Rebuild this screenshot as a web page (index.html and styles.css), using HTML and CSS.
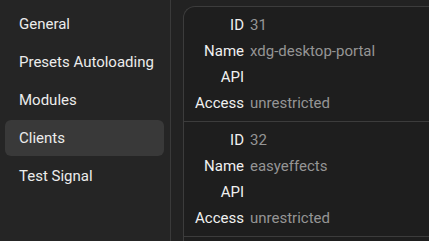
FILE: index.html
```html
<!DOCTYPE html>
<html>
<head>
<meta charset="utf-8">
<link rel="stylesheet" href="styles.css">
</head>
<body>
<div class="app">
  <nav class="sidebar">
    <div class="item">General</div>
    <div class="item">Presets Autoloading</div>
    <div class="item">Modules</div>
    <div class="item selected">Clients</div>
    <div class="item">Test Signal</div>
  </nav>
  <main class="content">
    <div class="card">
      <div class="client">
        <div class="row"><span class="label">ID</span><span class="value">31</span></div>
        <div class="row"><span class="label">Name</span><span class="value">xdg-desktop-portal</span></div>
        <div class="row"><span class="label">API</span><span class="value"></span></div>
        <div class="row"><span class="label">Access</span><span class="value">unrestricted</span></div>
      </div>
      <div class="client">
        <div class="row"><span class="label">ID</span><span class="value">32</span></div>
        <div class="row"><span class="label">Name</span><span class="value">easyeffects</span></div>
        <div class="row"><span class="label">API</span><span class="value"></span></div>
        <div class="row"><span class="label">Access</span><span class="value">unrestricted</span></div>
      </div>
      <div class="client"></div>
    </div>
  </main>
</div>
</body>
</html>
```
FILE: styles.css
```css
html, body {
  margin: 0;
  padding: 0;
  background: #222222;
  overflow: hidden;
}
body {
  font-family: Roboto, "Noto Sans", sans-serif;
  font-size: 15px;
}
.app {
  display: flex;
  width: 429px;
  height: 241px;
  overflow: hidden;
}
.sidebar {
  width: 171px;
  flex: none;
  box-sizing: border-box;
  background: #252525;
  border-right: 1px solid #3a3a3a;
  padding: 6px 6px 0 5px;
  display: flex;
  flex-direction: column;
  gap: 2px;
}
.item {
  height: 36px;
  display: flex;
  align-items: center;
  padding-left: 14px;
  border-radius: 6px;
  color: #ececec;
}
.item.selected {
  background: #393939;
}
.content {
  flex: 1;
  padding: 6px 0 0 12px;
  overflow: hidden;
}
.card {
  width: 300px;
  background: #1e1e1e;
  border: 1px solid #3c3c3c;
  border-right: none;
  border-radius: 12px 0 0 0;
}
.client {
  padding: 5px 0 5px;
  border-bottom: 1px solid #3c3c3c;
  display: grid;
  grid-template-rows: repeat(4, 26px);
}
.row {
  display: grid;
  grid-template-columns: 60px 1fr;
  column-gap: 6px;
  align-items: center;
}
.label {
  text-align: right;
  color: #f0f0f0;
}
.value {
  color: #959595;
}
```
